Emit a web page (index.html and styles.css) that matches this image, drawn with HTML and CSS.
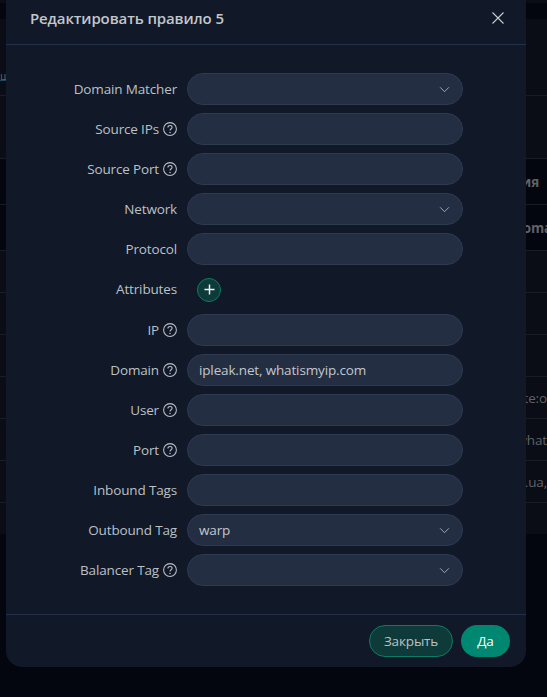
FILE: index.html
```html
<!DOCTYPE html>
<html lang="ru">
<head>
  <meta charset="UTF-8" />
  <title>Редактировать правило 5</title>
  <link rel="stylesheet" href="styles.css">
</head>
<body>
  <!-- table behind the dimmed mask -->
  <div class="backdrop">
    <div class="bg-bar"></div>
    <div class="bg-row bg-tabs"><span class="bg-tab">ш</span></div>
    <div class="bg-row bg-space"></div>
    <div class="bg-row bg-head"><span class="bg-right bg-title">ия</span></div>
    <div class="bg-row bg-head"><span class="bg-right bg-cut">oma</span></div>
    <div class="bg-row"></div>
    <div class="bg-row"></div>
    <div class="bg-row"></div>
    <div class="bg-row"><span class="bg-right">te:o</span></div>
    <div class="bg-row"><span class="bg-right">what</span></div>
    <div class="bg-row"><span class="bg-right">.ua,</span></div>
    <div class="bg-row bg-last"></div>
  </div>

  <div class="modal">
    <div class="modal-header">
      <div class="modal-title">Редактировать правило 5</div>
      <svg class="close-icon" viewBox="0 0 12 12"><path d="M0.5 0.5 L11.5 11.5 M11.5 0.5 L0.5 11.5"/></svg>
    </div>

    <div class="modal-body">
      <div class="form-row">
        <label>Domain Matcher</label>
        <div class="field"><svg class="chevron" viewBox="0 0 12 8"><path d="M1 1.5 L6 6.5 L11 1.5"/></svg></div>
      </div>
      <div class="form-row">
        <label>Source IPs <svg class="help" viewBox="0 0 14 14"><circle cx="7" cy="7" r="6.4"/><path d="M4.9 5.5 C4.9 4.2 5.9 3.4 7 3.4 C8.2 3.4 9.1 4.2 9.1 5.3 C9.1 6.7 7 6.8 7 8.6"/><circle class="dot" cx="7" cy="10.5" r="0.75"/></svg></label>
        <div class="field"></div>
      </div>
      <div class="form-row">
        <label>Source Port <svg class="help" viewBox="0 0 14 14"><circle cx="7" cy="7" r="6.4"/><path d="M4.9 5.5 C4.9 4.2 5.9 3.4 7 3.4 C8.2 3.4 9.1 4.2 9.1 5.3 C9.1 6.7 7 6.8 7 8.6"/><circle class="dot" cx="7" cy="10.5" r="0.75"/></svg></label>
        <div class="field"></div>
      </div>
      <div class="form-row">
        <label>Network</label>
        <div class="field"><svg class="chevron" viewBox="0 0 12 8"><path d="M1 1.5 L6 6.5 L11 1.5"/></svg></div>
      </div>
      <div class="form-row">
        <label>Protocol</label>
        <div class="field"></div>
      </div>
      <div class="form-row attrs">
        <label>Attributes</label>
        <div class="add-btn"><svg viewBox="0 0 12 12"><path d="M6 0.5 V11.5 M0.5 6 H11.5"/></svg></div>
      </div>
      <div class="form-row">
        <label>IP <svg class="help" viewBox="0 0 14 14"><circle cx="7" cy="7" r="6.4"/><path d="M4.9 5.5 C4.9 4.2 5.9 3.4 7 3.4 C8.2 3.4 9.1 4.2 9.1 5.3 C9.1 6.7 7 6.8 7 8.6"/><circle class="dot" cx="7" cy="10.5" r="0.75"/></svg></label>
        <div class="field"></div>
      </div>
      <div class="form-row">
        <label>Domain <svg class="help" viewBox="0 0 14 14"><circle cx="7" cy="7" r="6.4"/><path d="M4.9 5.5 C4.9 4.2 5.9 3.4 7 3.4 C8.2 3.4 9.1 4.2 9.1 5.3 C9.1 6.7 7 6.8 7 8.6"/><circle class="dot" cx="7" cy="10.5" r="0.75"/></svg></label>
        <div class="field">ipleak.net, whatismyip.com</div>
      </div>
      <div class="form-row">
        <label>User <svg class="help" viewBox="0 0 14 14"><circle cx="7" cy="7" r="6.4"/><path d="M4.9 5.5 C4.9 4.2 5.9 3.4 7 3.4 C8.2 3.4 9.1 4.2 9.1 5.3 C9.1 6.7 7 6.8 7 8.6"/><circle class="dot" cx="7" cy="10.5" r="0.75"/></svg></label>
        <div class="field"></div>
      </div>
      <div class="form-row">
        <label>Port <svg class="help" viewBox="0 0 14 14"><circle cx="7" cy="7" r="6.4"/><path d="M4.9 5.5 C4.9 4.2 5.9 3.4 7 3.4 C8.2 3.4 9.1 4.2 9.1 5.3 C9.1 6.7 7 6.8 7 8.6"/><circle class="dot" cx="7" cy="10.5" r="0.75"/></svg></label>
        <div class="field"></div>
      </div>
      <div class="form-row">
        <label>Inbound Tags</label>
        <div class="field"></div>
      </div>
      <div class="form-row">
        <label>Outbound Tag</label>
        <div class="field">warp<svg class="chevron" viewBox="0 0 12 8"><path d="M1 1.5 L6 6.5 L11 1.5"/></svg></div>
      </div>
      <div class="form-row">
        <label>Balancer Tag <svg class="help" viewBox="0 0 14 14"><circle cx="7" cy="7" r="6.4"/><path d="M4.9 5.5 C4.9 4.2 5.9 3.4 7 3.4 C8.2 3.4 9.1 4.2 9.1 5.3 C9.1 6.7 7 6.8 7 8.6"/><circle class="dot" cx="7" cy="10.5" r="0.75"/></svg></label>
        <div class="field"><svg class="chevron" viewBox="0 0 12 8"><path d="M1 1.5 L6 6.5 L11 1.5"/></svg></div>
      </div>
    </div>

    <div class="modal-footer">
      <button class="btn btn-close">Закрыть</button>
      <button class="btn btn-ok">Да</button>
    </div>
  </div>
</body>
</html>
```

FILE: styles.css
```css
html, body {
  margin: 0;
  height: 100%;
  overflow: hidden;
}
body {
  width: 547px;
  height: 697px;
  position: relative;
  background: #03060e;
  font-family: "Open Sans", "Noto Sans", sans-serif;
  font-size: 13.5px;
  letter-spacing: -0.15px;
  color: #bcc0c7;
}

/* dimmed page */
.backdrop {
  height: 534px;
  box-sizing: border-box;
  padding-top: 3px;
  background: #0a0d15;
  overflow: hidden;
}
.bg-bar {
  height: 16px;
  background: #03060e;
}
.bg-row {
  height: 41px;
  border-bottom: 1px solid #181c25;
  display: flex;
  align-items: center;
  color: #5f6268;
}
.bg-right {
  margin-left: auto;
  white-space: nowrap;
}
.bg-title {
  margin-right: 8px;
  font-weight: 700;
}
.bg-cut {
  margin-right: -5px;
  font-weight: 700;
}
.bg-tabs {
  height: 76px;
  align-items: flex-start;
}
.bg-tab {
  margin-top: 52px;
  color: #5b6168;
  font-size: 11px;
  border-bottom: 1px solid #1f4a5e;
  line-height: 9px;
}
.bg-space {
  height: 62px;
}
.bg-head {
  height: 45px;
  background: #03060e;
}
.bg-last {
  height: 31px;
  border-bottom: none;
}

/* dialog */
.modal {
  position: absolute;
  left: 6px;
  top: 0;
  width: 520px;
  height: 667px;
  background: #111827;
  border-radius: 0 0 16px 16px;
  display: flex;
  flex-direction: column;
}
.modal-header {
  height: 45px;
  flex: none;
  box-sizing: border-box;
  border-bottom: 1px solid #243049;
  display: flex;
  align-items: center;
  justify-content: space-between;
  padding: 0 22px 8px 24px;
}
.modal-title {
  font-size: 15px;
  font-weight: 600;
  letter-spacing: -0.12px;
  color: #c3c6cc;
}
.close-icon {
  width: 12px;
  height: 12px;
  fill: none;
  stroke: #c9ccd2;
  stroke-width: 1.1;
}
.modal-body {
  flex: 1;
  padding-top: 28px;
  display: flex;
  flex-direction: column;
  gap: 8px;
}
.form-row {
  display: flex;
  align-items: center;
  height: 32px;
}
.form-row.attrs {
  height: 33px;
}
.form-row label {
  width: 171px;
  flex: none;
  display: flex;
  justify-content: flex-end;
  align-items: center;
  gap: 4px;
  white-space: nowrap;
  margin-top: -1px;
}
.field {
  margin-left: 10px;
  width: 276px;
  height: 32px;
  box-sizing: border-box;
  background: #232e42;
  border: 1px solid #2d3a52;
  border-radius: 16px;
  padding: 0 12px 0 11px;
  display: flex;
  align-items: center;
  justify-content: space-between;
  color: #c3c6cc;
}
.chevron {
  width: 11px;
  height: 7px;
  margin-left: auto;
  fill: none;
  stroke: #a7abb3;
  stroke-width: 1.1;
}
.help {
  width: 14px;
  height: 14px;
  fill: none;
  stroke: #bcc0c7;
  stroke-width: 1.05;
}
.help .dot {
  fill: #bcc0c7;
  stroke: none;
}
.add-btn {
  margin-left: 20px;
  width: 24px;
  height: 24px;
  box-sizing: border-box;
  border-radius: 50%;
  background: #0f3a3a;
  border: 1px solid #0a7c66;
  display: flex;
  align-items: center;
  justify-content: center;
}
.add-btn svg {
  width: 11px;
  height: 11px;
  fill: none;
  stroke: #e6f0ee;
  stroke-width: 1.6;
}
.modal-footer {
  height: 53px;
  flex: none;
  box-sizing: border-box;
  border-top: 1px solid #243049;
  display: flex;
  align-items: flex-start;
  justify-content: flex-end;
  gap: 8px;
  padding: 10px 16px 0 0;
}
.btn {
  height: 32px;
  border-radius: 16px;
  font-family: inherit;
  font-size: 13.5px;
  letter-spacing: -0.15px;
  padding: 0;
  box-sizing: border-box;
}
.btn-close {
  width: 84px;
  background: #0f3a3a;
  border: 1px solid #0a7c66;
  color: #bcc0c7;
}
.btn-ok {
  width: 49px;
  background: #008771;
  border: none;
  color: #fff;
  font-weight: 500;
}
```
